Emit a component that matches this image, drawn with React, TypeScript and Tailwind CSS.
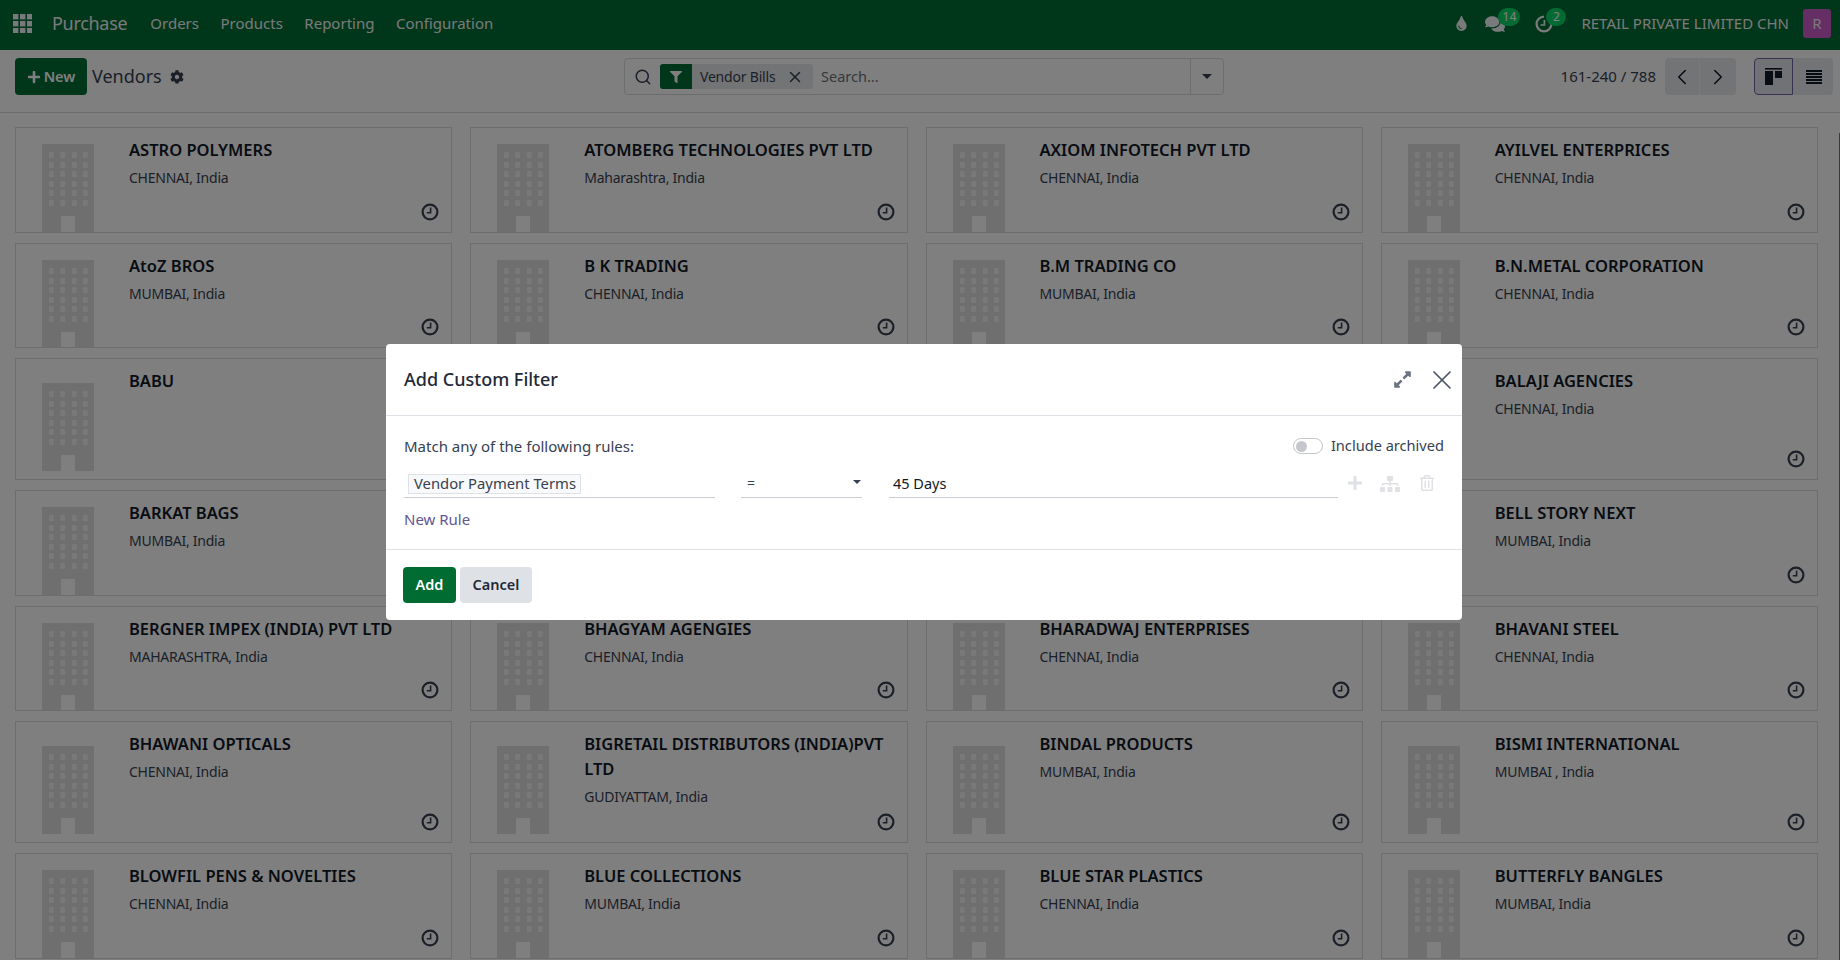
import { ChevronLeft, ChevronRight, Search, X } from "lucide-react";
import { FaCog, FaComments, FaExpandAlt, FaFilter, FaPlus, FaRegTrashAlt, FaSitemap, FaTint } from "react-icons/fa";

interface Vendor {
  name: string;
  place: string;
  tall?: boolean;
}

// the two middle cards of rows 3 and 4 sit behind the dialog
const vendors: Vendor[] = [
  { name: "ASTRO POLYMERS", place: "CHENNAI, India" },
  { name: "ATOMBERG TECHNOLOGIES PVT LTD", place: "Maharashtra, India" },
  { name: "AXIOM INFOTECH PVT LTD", place: "CHENNAI, India" },
  { name: "AYILVEL ENTERPRICES", place: "CHENNAI, India" },
  { name: "AtoZ BROS", place: "MUMBAI, India" },
  { name: "B K TRADING", place: "CHENNAI, India" },
  { name: "B.M TRADING CO", place: "MUMBAI, India" },
  { name: "B.N.METAL CORPORATION", place: "CHENNAI, India" },
  { name: "BABU", place: "", tall: true },
  { name: "", place: "", tall: true },
  { name: "", place: "", tall: true },
  { name: "BALAJI AGENCIES", place: "CHENNAI, India", tall: true },
  { name: "BARKAT BAGS", place: "MUMBAI, India" },
  { name: "", place: "" },
  { name: "", place: "" },
  { name: "BELL STORY NEXT", place: "MUMBAI, India" },
  { name: "BERGNER IMPEX (INDIA) PVT LTD", place: "MAHARASHTRA, India" },
  { name: "BHAGYAM AGENGIES", place: "CHENNAI, India" },
  { name: "BHARADWAJ ENTERPRISES", place: "CHENNAI, India" },
  { name: "BHAVANI STEEL", place: "CHENNAI, India" },
  { name: "BHAWANI OPTICALS", place: "CHENNAI, India", tall: true },
  { name: "BIGRETAIL DISTRIBUTORS (INDIA)PVT LTD", place: "GUDIYATTAM, India", tall: true },
  { name: "BINDAL PRODUCTS", place: "MUMBAI, India", tall: true },
  { name: "BISMI INTERNATIONAL", place: "MUMBAI , India", tall: true },
  { name: "BLOWFIL PENS & NOVELTIES", place: "CHENNAI, India" },
  { name: "BLUE COLLECTIONS", place: "MUMBAI, India" },
  { name: "BLUE STAR PLASTICS", place: "CHENNAI, India" },
  { name: "BUTTERFLY BANGLES", place: "MUMBAI, India" },
];

function AppsIcon() {
  const cells = [0, 7, 14];
  return (
    <svg width="19" height="19" viewBox="0 0 19 19" fill="#f3f4f6">
      {cells.map((y) => cells.map((x) => <rect key={`${x}-${y}`} x={x} y={y} width="5.4" height="5.4" />))}
    </svg>
  );
}

function Building() {
  const cols = [7, 18.3, 30, 41];
  const rows = [8, 18, 27, 37, 46, 56];
  return (
    <div className="shrink-0 mt-[16px] h-[87.5px] overflow-hidden">
      <svg width="52" height="90" viewBox="0 0 52 90" className="block">
        <rect width="52" height="90" fill="#dedede" />
        {rows.map((y) => cols.map((x) => <rect key={`${x}-${y}`} x={x} y={y} width="4.7" height="6" fill="#f2f2f2" />))}
        <rect x="19" y="72" width="14" height="18" fill="#ffffff" />
      </svg>
    </div>
  );
}

function ClockIcon() {
  return (
    <svg width="18" height="18" viewBox="0 0 18 18" fill="none" stroke="#374151">
      <circle cx="9" cy="9" r="7.4" strokeWidth="2.2" />
      <path d="M9.6 4.5V9.8H5.8" strokeWidth="1.6" />
    </svg>
  );
}

function ActivityIcon() {
  return (
    <svg width="18" height="18" viewBox="0 0 18 18" fill="none" stroke="#f3f4f6">
      <path d="M9 1.6A7.4 7.4 0 1 0 16.4 9" strokeWidth="2.4" />
      <path d="M9.4 5V10H5.5" strokeWidth="1.7" />
    </svg>
  );
}

function KanbanIcon() {
  return (
    <svg width="17" height="17" viewBox="0 0 17 17" fill="#111827">
      <rect x="0" y="0" width="17" height="1.6" />
      <rect x="0" y="3" width="8" height="14" />
      <rect x="10" y="3" width="7" height="7" />
    </svg>
  );
}

function ListIcon() {
  return (
    <svg width="16" height="14" viewBox="0 0 16 14" fill="#111827">
      {[0, 3, 6, 9, 12].map((y) => (
        <rect key={y} x="0" y={y} width="16" height="2" />
      ))}
    </svg>
  );
}

function VendorCard({ vendor }: { vendor: Vendor }) {
  return (
    <div className={`flex items-center gap-[35px] pl-[26px] pr-[12px] bg-white border border-[#d8dadd] overflow-hidden ${vendor.tall ? "h-[122px]" : "h-[105.5px]"}`}>
      <Building />
      <div className="flex-1 min-w-0 self-stretch flex flex-col pt-[9px] pb-[11px]">
        <div className="text-[16.5px] leading-[25px] font-semibold text-[#111827]">{vendor.name}</div>
        {vendor.place && <div className="mt-[5px] text-[14px] leading-[21px] text-[#374151] tracking-[-0.25px]">{vendor.place}</div>}
        <div className="mt-auto self-end">
          <ClockIcon />
        </div>
      </div>
    </div>
  );
}

function NavBar() {
  return (
    <div className="h-[50px] bg-[#016c32] flex items-center pb-[3px] text-[#f3f4f6]">
      <div className="ml-[13px] mr-[20px] flex">
        <AppsIcon />
      </div>
      <span className="text-[18px] tracking-[-0.3px] mr-[23px]">Purchase</span>
      <div className="flex gap-[21.5px] text-[15px]">
        <span>Orders</span>
        <span>Products</span>
        <span>Reporting</span>
        <span>Configuration</span>
      </div>
      <div className="ml-auto flex items-center pr-[9px]">
        <FaTint className="text-[15px] mr-[16px]" />
        <div className="flex items-center mr-[15px]">
          <FaComments className="text-[20px]" />
          <span className="-ml-[7px] -mt-[13px] min-w-[22px] h-[18px] px-1 rounded-full bg-[#06d468] text-white text-[12px] leading-[18px] text-center">14</span>
        </div>
        <div className="flex items-center mr-[15px]">
          <ActivityIcon />
          <span className="-ml-[7px] -mt-[13px] min-w-[20px] h-[18px] px-1 rounded-full bg-[#06d468] text-white text-[12px] leading-[18px] text-center">2</span>
        </div>
        <span className="text-[15px] mr-[14px]">RETAIL PRIVATE LIMITED CHN</span>
        <div className="w-[28px] h-[29px] rounded-[3px] bg-[#cb5ccb] text-[15px] flex items-center justify-center">R</div>
      </div>
    </div>
  );
}

function ControlPanel() {
  return (
    <div className="h-[63px] bg-white border-b border-[#d8dadd] flex items-start pt-[8px] pl-[15px] pr-[7px]">
      <div className="w-[490px] flex items-center">
        <button className="w-[72px] h-[37px] rounded-[4px] bg-[#016c32] text-white text-[14.5px] font-semibold flex items-center justify-center gap-[3px]">
          <FaPlus className="text-[14px]" /> New
        </button>
        <span className="ml-[5px] -mt-[1px] text-[18px] text-[#374151]">Vendors</span>
        <FaCog className="ml-[8px] text-[14px] text-[#374151]" />
      </div>
      <div className="ml-[119px] w-[600px] h-[37px] rounded-[4px] border border-[#d8dadd] flex items-center">
        <Search className="ml-[9px] w-[18px] h-[18px] text-[#374151]" strokeWidth={2} />
        <div className="ml-[8px] h-[25px] w-[153px] rounded-[3px] bg-[#e7e9ed] flex items-center overflow-hidden">
          <div className="w-[32px] h-full bg-[#016c32] flex items-center justify-center">
            <FaFilter className="text-[12px] text-white" />
          </div>
          <span className="ml-[8px] -mt-[1px] text-[14px] text-[#374151] tracking-[-0.2px]">Vendor Bills</span>
          <X className="ml-[11px] w-[18px] h-[18px] text-[#374151]" strokeWidth={2} />
        </div>
        <span className="ml-[8px] text-[14.5px] text-[#6b7280]">Search...</span>
        <div className="ml-auto w-[33px] h-full border-l border-[#d8dadd] flex items-center justify-center">
          <div className="w-0 h-0 border-x-[5px] border-x-transparent border-t-[5px] border-t-[#374151]" />
        </div>
      </div>
      <div className="ml-auto flex items-center">
        <span className="text-[15px] text-[#374151] mr-[9px]">161-240 / 788</span>
        <div className="flex h-[37px] rounded-[4px] overflow-hidden bg-[#e7e9ed] text-[#111827]">
          <div className="w-[35px] flex items-center justify-center border-r border-[#f3f4f6]">
            <ChevronLeft className="w-[26px] h-[26px]" strokeWidth={1.4} />
          </div>
          <div className="w-[36px] flex items-center justify-center">
            <ChevronRight className="w-[26px] h-[26px]" strokeWidth={1.4} />
          </div>
        </div>
        <div className="ml-[18px] flex h-[37px] rounded-[4px] overflow-hidden bg-[#e7e9ed]">
          <div className="w-[39px] flex items-center justify-center rounded-l-[4px] border border-[#71639e] bg-[#e2e4ea]">
            <KanbanIcon />
          </div>
          <div className="w-[40px] flex items-center justify-center pl-[1px]">
            <ListIcon />
          </div>
        </div>
      </div>
    </div>
  );
}

function FilterDialog() {
  return (
    <div className="absolute left-[386px] top-[344px] w-[1076px] h-[276px] bg-white rounded-[4px] flex flex-col text-[#374151]">
      <div className="h-[72px] shrink-0 border-b border-[#dee2e6] flex items-center pl-[18px] pr-[4px]">
        <span className="-mt-[1px] text-[18px] font-medium text-[#1f2937]">Add Custom Filter</span>
        <FaExpandAlt className="ml-auto text-[19px] text-[#6b7280]" />
        <X className="ml-[14px] w-[32px] h-[32px] text-[#4b5563]" strokeWidth={1.3} />
      </div>
      <div className="h-[134px] shrink-0 border-b border-[#dee2e6] pl-[18px] pr-[18px] flex flex-col">
        <div className="mt-[19px] h-[22px] flex items-center">
          <span className="text-[15px]">Match any of the following rules:</span>
          <div className="ml-auto w-[30px] h-[16px] rounded-full border border-[#c4c7cc] flex items-center pl-[2px]">
            <div className="w-[11px] h-[11px] rounded-full bg-[#c4c7cc]" />
          </div>
          <span className="ml-[8px] text-[14.6px]">Include archived</span>
        </div>
        <div className="mt-[12px] flex items-stretch h-[29px]">
          <div className="w-[311px] border-b border-[#c9ccd0] pl-[4px] flex items-start">
            <span className="mt-[5px] h-[20px] w-[173px] border border-[#dee2e6] bg-[#f8f9fa] text-[14.8px] leading-[17px] pl-[5px] whitespace-nowrap">Vendor Payment Terms</span>
          </div>
          <div className="ml-[26px] w-[121px] border-b border-[#c9ccd0] pl-[6px] pr-[1px] flex items-start justify-between">
            <span className="mt-[4px] text-[14px] leading-[20px]">=</span>
            <div className="mt-[11px] w-0 h-0 border-x-[4px] border-x-transparent border-t-[4px] border-t-[#374151]" />
          </div>
          <div className="ml-[27px] w-[449px] border-b border-[#c9ccd0] pl-[4px]">
            <span className="block mt-[4px] text-[14.5px] leading-[20px] text-[#111827]">45 Days</span>
          </div>
          <div className="ml-[9px] flex-1 flex items-start text-[#dfe1e4] pt-[6px]">
            <FaPlus className="text-[16px]" />
            <FaSitemap className="ml-[17px] text-[20px] -mt-[1px]" />
            <FaRegTrashAlt className="ml-[19px] text-[16px]" />
          </div>
        </div>
        <span className="mt-[11px] text-[15px] leading-[20px] text-[#5f5690]">New Rule</span>
      </div>
      <div className="flex-1 flex items-center pl-[17px] gap-[4px]">
        <button className="w-[53px] h-[36px] rounded-[4px] bg-[#016c32] text-white text-[14.5px] font-semibold">Add</button>
        <button className="w-[72px] h-[36px] rounded-[4px] bg-[#dee2e6] text-[#1f2937] text-[14.5px] font-semibold">Cancel</button>
      </div>
    </div>
  );
}

export default function App() {
  return (
    <div className="relative h-screen w-full overflow-hidden bg-white font-['Noto_Sans',sans-serif]">
      <NavBar />
      <ControlPanel />
      <div className="grid grid-cols-4 gap-x-[18px] gap-y-[10px] pt-[14px] pl-[15px] pr-[22px]">
        {vendors.map((v, i) => (
          <VendorCard key={i} vendor={v} />
        ))}
      </div>
      <div className="absolute inset-0 bg-black/50" />
      {/* sliver of the page scrollbar at the right edge */}
      <div className="absolute right-0 top-[133px] bottom-0 w-px bg-[#3a3a3a]" />
      <FilterDialog />
    </div>
  );
}
